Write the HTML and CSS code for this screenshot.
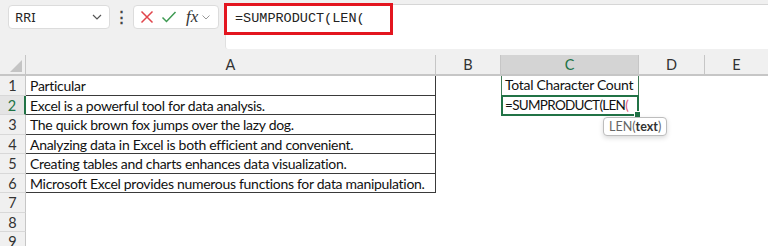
FILE: index.html
```html
<!DOCTYPE html>
<html lang="en">
<head>
  <meta charset="UTF-8" />
  <title>Sheet</title>
  <link rel="stylesheet" href="styles.css">
</head>
<body>
  <div class="toolbar">
    <div class="namebox">
      <span>RRI</span>
      <svg class="chev" width="10" height="6" viewBox="0 0 10 6"><polyline points="1,1 5,5 9,1" fill="none" stroke="#555" stroke-width="1.2"/></svg>
    </div>
    <div class="dots">⋮</div>
    <div class="fnbox">
      <svg width="14" height="14" viewBox="0 0 14 14"><path d="M1.5 1.5 L12.5 12.5 M12.5 1.5 L1.5 12.5" stroke="#e0454b" stroke-width="1.5" fill="none"/></svg>
      <svg width="16" height="14" viewBox="0 0 16 14"><polyline points="1.5,7.5 5.5,11.5 14.5,2" stroke="#3e9a52" stroke-width="1.5" fill="none"/></svg>
      <span class="fx">fx</span>
      <svg width="8" height="5" viewBox="0 0 8 5"><polyline points="0.5,0.5 4,4 7.5,0.5" fill="none" stroke="#999" stroke-width="1"/></svg>
    </div>
    <div class="formulabar">
      <div class="formula">=SUMPRODUCT(LEN(</div>
    </div>
  </div>

  <div class="sheet">
    <div class="corner"><span class="tri"></span></div>
    <div class="colhead">A</div>
    <div class="colhead">B</div>
    <div class="colhead active">C</div>
    <div class="colhead">D</div>
    <div class="colhead last">E</div>

    <div class="rowhead">1</div>
    <div class="cell tbl">Particular</div>
    <div class="cell"></div>
    <div class="cell c1">Total Character Count</div>
    <div class="cell"></div>
    <div class="cell"></div>

    <div class="rowhead active">2</div>
    <div class="cell tbl">Excel is a powerful tool for data analysis.</div>
    <div class="cell"></div>
    <div class="cell c2">=SUMPRODUCT(LEN<span class="paren">(</span><span class="handle"></span></div>
    <div class="cell"></div>
    <div class="cell"></div>

    <div class="rowhead">3</div>
    <div class="cell tbl">The quick brown fox jumps over the lazy dog.</div>
    <div class="cell"></div>
    <div class="cell"></div>
    <div class="cell"></div>
    <div class="cell"></div>

    <div class="rowhead">4</div>
    <div class="cell tbl">Analyzing data in Excel is both efficient and convenient.</div>
    <div class="cell"></div>
    <div class="cell"></div>
    <div class="cell"></div>
    <div class="cell"></div>

    <div class="rowhead">5</div>
    <div class="cell tbl">Creating tables and charts enhances data visualization.</div>
    <div class="cell"></div>
    <div class="cell"></div>
    <div class="cell"></div>
    <div class="cell"></div>

    <div class="rowhead">6</div>
    <div class="cell tbl">Microsoft Excel provides numerous functions for data manipulation.</div>
    <div class="cell"></div>
    <div class="cell"></div>
    <div class="cell"></div>
    <div class="cell"></div>

    <div class="rowhead">7</div>
    <div class="cell"></div><div class="cell"></div><div class="cell"></div><div class="cell"></div><div class="cell"></div>
    <div class="rowhead">8</div>
    <div class="cell"></div><div class="cell"></div><div class="cell"></div><div class="cell"></div><div class="cell"></div>
    <div class="rowhead">9</div>
    <div class="cell"></div><div class="cell"></div><div class="cell"></div><div class="cell"></div><div class="cell"></div>

    <div class="tip">LEN(<b>text</b>)</div>
  </div>
</body>
</html>
```

FILE: styles.css
```css
body {
  margin: 0;
  background: #fff;
  font-family: Lato, 'Open Sans', sans-serif;
  overflow: hidden;
}
.toolbar {
  height: 55px;
  background: #f0f0f0;
  display: flex;
  align-items: flex-start;
}
.namebox {
  margin: 5px 0 0 8px;
  width: 102px;
  height: 24px;
  box-sizing: border-box;
  background: #fff;
  border: 1px solid #dcdcdc;
  border-radius: 4px;
  display: flex;
  align-items: center;
  justify-content: space-between;
  padding: 0 7px 0 6px;
  font-family: 'Noto Sans', sans-serif;
  font-size: 13px;
  color: #222;
}
.dots {
  width: 23px;
  text-align: center;
  margin-top: 7px;
  font-size: 15px;
  font-weight: bold;
  color: #444;
  line-height: 18px;
}
.fnbox {
  margin-top: 5px;
  width: 86px;
  height: 24px;
  box-sizing: border-box;
  background: #fff;
  border: 1px solid #dcdcdc;
  border-radius: 4px;
  display: flex;
  align-items: center;
  padding: 0 4px 0 6px;
  gap: 7px;
}
.fx {
  font-family: 'Liberation Serif', serif;
  font-style: italic;
  font-size: 17px;
  color: #333;
  margin-left: 2px;
  margin-right: -3px;
}
.formulabar {
  margin: 4px 0 0 6px;
  flex: 1;
  height: 44px;
  background: #fff;
  border-top: 1px solid #d6d6d6;
  border-left: 1px solid #e0e0e0;
  border-radius: 3px 0 0 3px;
}
.formula {
  margin: -2px 0 0 -2px;
  width: 169px;
  height: 32px;
  box-sizing: border-box;
  border: 3px solid #e3151f;
  padding: 5px 0 0 8px;
  font-family: 'Liberation Mono', monospace;
  font-size: 13.5px;
  color: #222;
}
.sheet {
  position: relative;
  display: grid;
  grid-template-columns: 26px 410px 65px 138px 66px 1fr;
  grid-template-rows: 21px;
  grid-auto-rows: 19.5px;
  font-size: 14px;
  color: #111;
}
.corner, .colhead {
  background: #f0f0f0;
  border-bottom: 2px solid #c6c6c6;
  position: relative;
}
.corner { border-right: 1px solid #c6c6c6; }
.tri {
  position: absolute;
  right: 3px;
  bottom: 2px;
  border-style: solid;
  border-width: 0 0 12px 12px;
  border-color: transparent transparent #c4c4c4 transparent;
}
.colhead {
  text-align: center;
  line-height: 20px;
  color: #333;
  border-right: 1px solid #c6c6c6;
  font-size: 14.5px;
}
.colhead.last { border-right: none; }
.colhead.active {
  background: #d4d4d4;
  color: #217346;
}
.rowhead {
  background: #f0f0f0;
  border-right: 1px solid #c6c6c6;
  border-bottom: 1px solid #d8d8d8;
  text-align: center;
  color: #333;
  line-height: 19px;
  box-sizing: border-box;
  font-size: 14.5px;
}
.rowhead.active {
  color: #217346;
  background: #e4e4e4;
  border-right: 2px solid #217346;
}
.cell {
  padding-left: 4px;
  line-height: 19px;
  white-space: nowrap;
  box-sizing: border-box;
  letter-spacing: -0.3px;
}
.cell.tbl {
  border-bottom: 1px solid #3a3a3a;
  border-right: 1px solid #3a3a3a;
}
.cell.c1 {
  border: 1px solid #3f7b55;
  border-top: none;
  padding-left: 3px;
  line-height: 18px;
}
.cell.c2 {
  position: relative;
  border: 2px solid #217346;
  margin-top: -1px;
  height: 21px;
  padding-left: 2px;
  line-height: 17px;
  font-size: 13.5px;
  letter-spacing: -0.7px;
}
.paren { color: #e05a7c; }
.handle {
  position: absolute;
  right: -4px;
  bottom: -4px;
  width: 5px;
  height: 5px;
  background: #217346;
  border: 1px solid #fff;
}
.tip {
  position: absolute;
  left: 603px;
  top: 62px;
  height: 19px;
  box-sizing: border-box;
  padding: 0 5px;
  background: #fff;
  border: 1px solid #bdbdbd;
  border-radius: 4px;
  box-shadow: 0 2px 5px rgba(0, 0, 0, 0.15);
  font-size: 12.5px;
  line-height: 17px;
  color: #666;
}
.tip b { color: #333; }
```
